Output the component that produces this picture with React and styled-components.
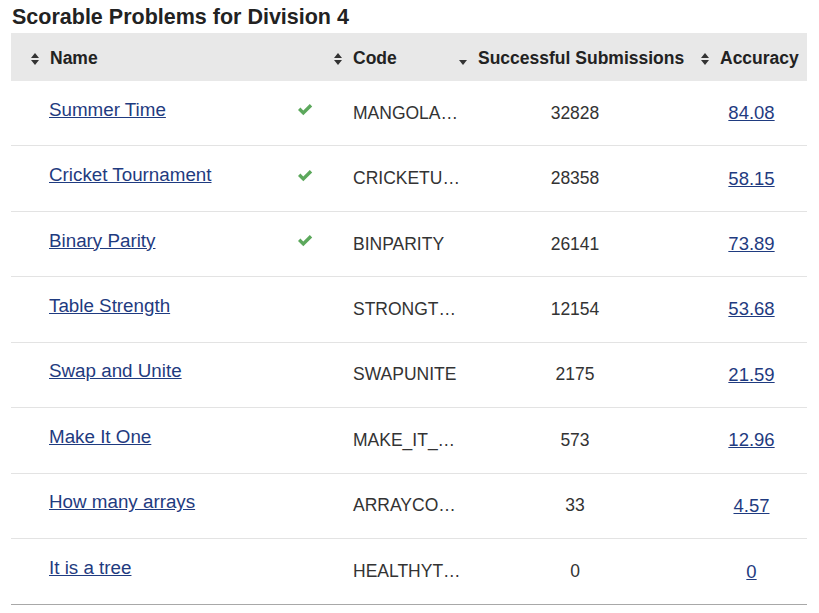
import React from "react";
import styled, { createGlobalStyle } from "styled-components";

const problems = [
  { name: "Summer Time", solved: true, code: "MANGOLA…", subs: 32828, acc: "84.08" },
  { name: "Cricket Tournament", solved: true, code: "CRICKETU…", subs: 28358, acc: "58.15" },
  { name: "Binary Parity", solved: true, code: "BINPARITY", subs: 26141, acc: "73.89" },
  { name: "Table Strength", solved: false, code: "STRONGT…", subs: 12154, acc: "53.68" },
  { name: "Swap and Unite", solved: false, code: "SWAPUNITE", subs: 2175, acc: "21.59" },
  { name: "Make It One", solved: false, code: "MAKE_IT_…", subs: 573, acc: "12.96" },
  { name: "How many arrays", solved: false, code: "ARRAYCO…", subs: 33, acc: "4.57" },
  { name: "It is a tree", solved: false, code: "HEALTHYT…", subs: 0, acc: "0" },
];

const GlobalStyle = createGlobalStyle`
  body {
    margin: 0;
    background: #fff;
    font-family: "Liberation Sans", Arial, sans-serif;
    color: #333;
  }
`;

const Page = styled.div`
  width: 819px;
  padding: 5px 0 0 11px;
  box-sizing: border-box;
`;

const Title = styled.h2`
  margin: 0 0 3px 1px;
  font-size: 21.5px;
  line-height: 25px;
  font-weight: bold;
  color: #222;
`;

const Table = styled.div`
  width: 796px;
  border-bottom: 1px solid #a8a8a8;
`;

const cols = "303px 125px 246px 122px";

const HeadRow = styled.div`
  display: grid;
  grid-template-columns: ${cols};
  height: 48px;
  box-sizing: border-box;
  padding-top: 3px;
  background: #e8e8e8;
`;

const HeadCell = styled.div`
  display: flex;
  align-items: center;
  gap: 11px;
  padding-left: ${(p) => p.$pad || 20}px;
  font-size: 17.5px;
  font-weight: bold;
  color: #222;
  white-space: nowrap;
`;

const Row = styled.div`
  display: grid;
  grid-template-columns: ${cols};
  height: 65.43px;
  box-sizing: border-box;
  border-bottom: 1px solid #e3e3e3;
  &:last-child {
    border-bottom: none;
  }
`;

const NameCell = styled.div`
  display: flex;
  align-items: center;
  justify-content: space-between;
  padding: 0 1px 7px 38px;
`;

const Link = styled.a`
  color: #1f3b80;
  font-size: ${(p) => p.$size || 18.5}px;
  text-decoration: underline;
  cursor: pointer;
`;

const CodeCell = styled.div`
  display: flex;
  align-items: center;
  padding-left: 39px;
  font-size: 17.5px;
  color: #333;
  white-space: nowrap;
`;

const NumCell = styled.div`
  display: flex;
  align-items: center;
  justify-content: center;
  padding: 0 ${(p) => p.$right}px 0 ${(p) => p.$left}px;
  font-size: 17.5px;
  color: #333;
`;

const SortBoth = () => (
  <svg width="8" height="12" viewBox="0 0 8 12">
    <path d="M4 0 L8 5 L0 5 Z M4 12 L8 7 L0 7 Z" fill="#333" />
  </svg>
);

const SortDown = () => (
  <svg width="8" height="12" viewBox="0 0 8 12">
    <path d="M0 7 L8 7 L4 12 Z" fill="#333" />
  </svg>
);

const Check = () => (
  <svg width="16" height="13" viewBox="0 0 16 13">
    <path d="M1 7 L3.4 4.6 L6.3 7.4 L12.8 1 L15.2 3.4 L6.3 12.2 Z" fill="#5ca85c" />
  </svg>
);

export default function App() {
  return (
    <Page>
      <GlobalStyle />
      <Title>Scorable Problems for Division 4</Title>
      <Table>
        <HeadRow>
          <HeadCell>
            <SortBoth />
            Name
          </HeadCell>
          <HeadCell>
            <SortBoth />
            Code
          </HeadCell>
          <HeadCell>
            <SortDown />
            Successful Submissions
          </HeadCell>
          <HeadCell $pad={16}>
            <SortBoth />
            Accuracy
          </HeadCell>
        </HeadRow>
        {problems.map((p) => (
          <Row key={p.name}>
            <NameCell>
              <Link $size={18.8}>{p.name}</Link>
              {p.solved && <Check />}
            </NameCell>
            <CodeCell>{p.code}</CodeCell>
            <NumCell $left={39} $right={13}>
              {p.subs}
            </NumCell>
            <NumCell $left={35} $right={24}>
              <Link>{p.acc}</Link>
            </NumCell>
          </Row>
        ))}
      </Table>
    </Page>
  );
}
